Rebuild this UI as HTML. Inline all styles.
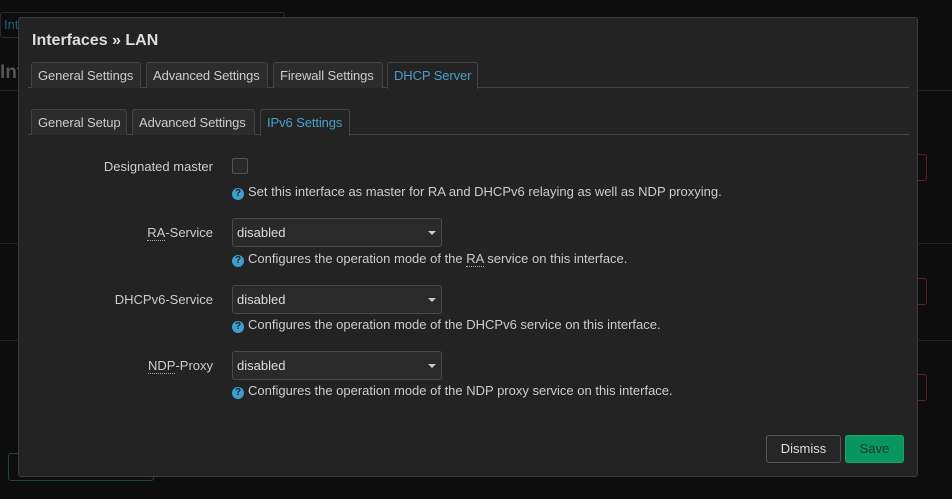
<!DOCTYPE html>
<html><head><style>
*{box-sizing:border-box;margin:0;padding:0}
body{width:952px;height:499px;background:#0d0d0d;font-family:"Liberation Sans",sans-serif;font-size:13px;color:#ccc;position:relative;overflow:hidden}
.a{position:absolute}
.modal{left:18px;top:17px;width:900px;height:460px;background:#232323;border:1px solid #3a3a3a;border-radius:3px}
.tab{position:absolute;height:26px;border:1px solid #444;border-bottom:none;border-radius:3px 3px 0 0;background:#2c2c2c;color:#ccc;font-size:13px;line-height:25px;padding-left:6px;letter-spacing:-0.1px}
.tab.act{background:#232323;color:#4a9fc9;height:27px}
.line{position:absolute;height:1px;background:#444}
.lbl{position:absolute;right:704px;font-size:13px;color:#ccc}
.sel{position:absolute;left:213px;width:210px;height:29px;border:1px solid #4a4a4a;border-radius:3px;background:#2a2a2a;padding:6px 4px;color:#ddd}
.sel:after{content:"";position:absolute;right:5px;top:12px;border:4px solid transparent;border-top:4px solid #ccc}
.help{position:absolute;left:213px;font-size:13px;color:#ccc}
.q{display:inline-block;width:12px;height:12px;border-radius:50%;background:#3b9fd0;color:#222;font-size:10px;font-weight:bold;text-align:center;line-height:12px;margin-right:4px;vertical-align:0}
.u{border-bottom:1px dotted #aaa}
</style></head><body>
<div class="a" style="left:0;top:12px;width:285px;height:26px;border:1px solid #2a2a2a;border-radius:3px"></div>
<div class="a" style="left:4px;top:17px;color:#1d5f7a">Int</div>
<div class="a" style="left:0;top:62px;font-size:19px;font-weight:bold;color:#555">Int</div>
<div class="a" style="left:0;top:90px;width:952px;height:1px;background:#222"></div>
<div class="a" style="left:0;top:243px;width:952px;height:1px;background:#222"></div>
<div class="a" style="left:0;top:340px;width:952px;height:1px;background:#222"></div>
<div class="a" style="left:900px;top:154px;width:27px;height:27px;border:1px solid #5a2020;border-radius:3px"></div>
<div class="a" style="left:900px;top:278px;width:27px;height:27px;border:1px solid #5a2020;border-radius:3px"></div>
<div class="a" style="left:900px;top:374px;width:27px;height:27px;border:1px solid #5a2020;border-radius:3px"></div>
<div class="a" style="left:8px;top:453px;width:146px;height:28px;border:1px solid #1d4a30;border-radius:3px"></div>
<div class="a modal">
 <div class="a" style="left:13px;top:14px;font-size:16px;font-weight:bold;color:#ddd">Interfaces » LAN</div>
 <div class="line" style="left:9px;top:69px;width:881px"></div>
 <div class="tab" style="left:12px;top:44px;width:110px">General Settings</div>
 <div class="tab" style="left:127px;top:44px;width:122px">Advanced Settings</div>
 <div class="tab" style="left:254px;top:44px;width:110px">Firewall Settings</div>
 <div class="tab act" style="left:368px;top:44px;width:91px">DHCP Server</div>
 <div class="line" style="left:9px;top:116px;width:881px"></div>
 <div class="tab" style="left:12px;top:91px;width:96px">General Setup</div>
 <div class="tab" style="left:113px;top:91px;width:123px">Advanced Settings</div>
 <div class="tab act" style="left:241px;top:91px;width:90px">IPv6 Settings</div>

 <div class="lbl" style="top:141px">Designated master</div>
 <div class="a" style="left:213px;top:140px;width:16px;height:16px;border:1px solid #555;border-radius:2px;background:#2a2a2a"></div>
 <div class="help" style="top:166px"><span class="q">?</span>Set this interface as master for RA and DHCPv6 relaying as well as NDP proxying.</div>

 <div class="lbl" style="top:207px"><span class="u">RA</span>-Service</div>
 <div class="sel" style="top:200px">disabled</div>
 <div class="help" style="top:233px"><span class="q">?</span>Configures the operation mode of the <span class="u">RA</span> service on this interface.</div>

 <div class="lbl" style="top:274px">DHCPv6-Service</div>
 <div class="sel" style="top:267px">disabled</div>
 <div class="help" style="top:299px"><span class="q">?</span>Configures the operation mode of the DHCPv6 service on this interface.</div>

 <div class="lbl" style="top:340px"><span class="u">NDP</span>-Proxy</div>
 <div class="sel" style="top:333px">disabled</div>
 <div class="help" style="top:365px"><span class="q">?</span>Configures the operation mode of the NDP proxy service on this interface.</div>

 <div class="a" style="left:747px;top:417px;width:75px;height:28px;border:1px solid #555;border-radius:3px;background:#262626;text-align:center;line-height:26px;color:#ddd">Dismiss</div>
 <div class="a" style="left:826px;top:417px;width:59px;height:28px;border:1px solid #0fa86a;border-radius:3px;background:#079560;text-align:center;line-height:26px;color:#0a3a24">Save</div>
</div>
</body></html>
